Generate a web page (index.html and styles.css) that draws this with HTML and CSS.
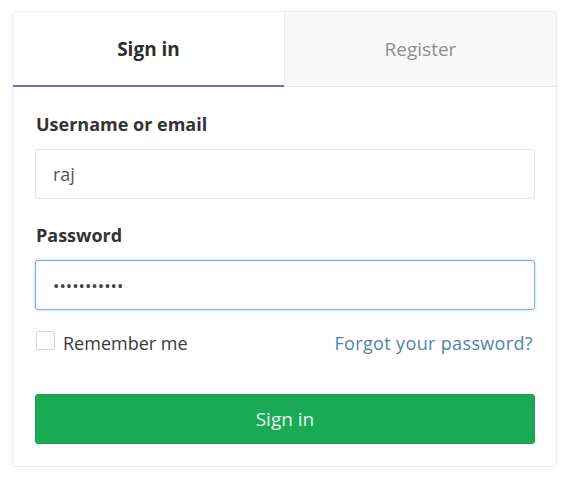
FILE: index.html
```html
<!DOCTYPE html>
<html lang="en">
<head>
<meta charset="utf-8">
<title>Sign in</title>
<link rel="stylesheet" href="styles.css">
</head>
<body>
<div class="card">
  <div class="tabs">
    <div class="tab active">Sign in</div>
    <div class="tab">Register</div>
  </div>
  <form class="form">
    <label class="label" for="user">Username or email</label>
    <input class="input" id="user" type="text" value="raj">
    <label class="label label-pw" for="pw">Password</label>
    <input class="input input-focus" id="pw" type="password" value="raj12345678">
    <div class="row">
      <label class="remember"><span class="check"></span>Remember me</label>
      <a class="forgot" href="#">Forgot your password?</a>
    </div>
    <button class="btn" type="button">Sign in</button>
  </form>
</div>
</body>
</html>
```

FILE: styles.css
```css
* { box-sizing: border-box; }
body {
  margin: 0;
  padding: 11px 0 0 12px;
  background: #fff;
  font-family: "Open Sans", "Noto Sans", sans-serif;
  color: #2e2e2e;
}
.card {
  width: 545px;
  border: 1px solid #ececec;
  border-radius: 3px;
  box-shadow: 0 1px 2px rgba(0,0,0,0.04);
  background: #fff;
}
.tabs {
  display: flex;
  height: 75px;
}
.tab {
  flex: 1;
  display: flex;
  align-items: center;
  justify-content: center;
  font-size: 19px;
  font-weight: 500;
  line-height: 24px;
  color: #8e8e8e;
  background: #f8f8f8;
  border-bottom: 1px solid #e6e6e6;
  border-left: 1px solid #ececec;
}
.tab.active {
  background: #fff;
  color: #2e2e2e;
  font-weight: 700;
  border-left: 0;
  border-bottom: 2px solid #7071b3;
}
.form {
  display: flex;
  flex-direction: column;
  padding: 26px 22px 22px 22px;
}
.label {
  font-size: 18px;
  font-weight: 700;
  line-height: 22px;
  color: #333;
  margin-left: 1px;
}
.input {
  margin-top: 14px;
  height: 50px;
  width: 500px;
  border: 1px solid #e5e5e5;
  border-radius: 3px;
  padding: 0 17px;
  font-family: inherit;
  font-size: 18px;
  color: #555;
  outline: none;
}
.input-focus {
  border-color: #7aaee4;
  box-shadow: 0 0 3px rgba(90,150,220,0.45);
  color: #444;
  font-size: 17px;
}
.label-pw { margin-top: 25px; }
.row {
  margin-top: 23px;
  display: flex;
  align-items: center;
  justify-content: space-between;
  height: 20px;
  line-height: 22px;
}
.remember {
  display: flex;
  align-items: center;
  font-size: 18px;
  color: #3a3a3a;
}
.check {
  width: 19px;
  height: 19px;
  border: 1px solid #d6d6d6;
  border-radius: 2px;
  margin: 0 8px 0 1px;
  position: relative;
  top: -3px;
  background: #fff;
}
.forgot {
  font-size: 18px;
  letter-spacing: 0.35px;
  color: #5084a8;
  text-decoration: none;
  margin-right: 1px;
}
.btn {
  margin-top: 41px;
  height: 50px;
  width: 500px;
  border: 1px solid #1aa04f;
  border-radius: 3px;
  background: #1aaa55;
  color: #e6f6ea;
  font-family: inherit;
  font-size: 19px;
}
```
